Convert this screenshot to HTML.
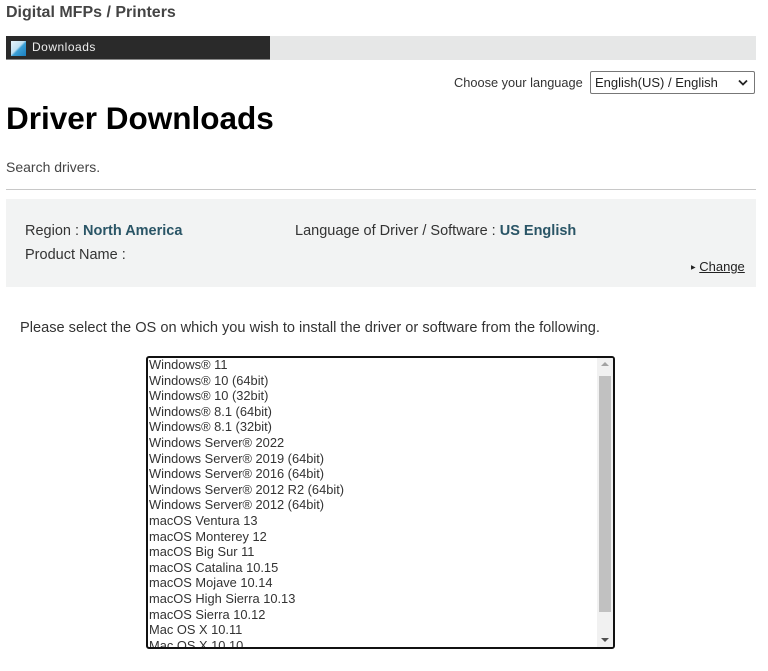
<!DOCTYPE html>
<html><head><meta charset="utf-8"><style>
*{margin:0;padding:0;box-sizing:border-box}
body{width:768px;height:671px;overflow:hidden;background:#fff;font-family:"Liberation Sans",Arial,sans-serif;color:#333;position:relative}
.a{position:absolute;white-space:nowrap}
.b{color:#2a5566;font-weight:bold}
.list div{height:15.6px;line-height:15.6px;font-size:12.85px;color:#333}
</style></head><body>
<div class="a" style="left:6px;top:4px;font-size:16px;font-weight:bold;color:#444">Digital MFPs / Printers</div>
<div class="a" style="left:6px;top:36px;width:750px;height:24px;background:#e6e7e7"></div>
<div class="a" style="left:6px;top:36px;width:264px;height:24px;background:#2a2a2a;border-bottom:1px solid #888"></div>
<div class="a" style="left:11px;top:41px;width:15px;height:15px;background:linear-gradient(135deg,#e8f4fb 0%,#bfe0f2 45%,#3b9fd6 55%,#1a7fc0 100%)"></div>
<div class="a" style="left:32px;top:40px;font-size:12px;color:#eee;letter-spacing:0.5px">Downloads</div>
<div class="a" style="left:454px;top:75px;font-size:12.8px;color:#333">Choose your language</div>
<div class="a" style="left:590px;top:71px;width:165px;height:23px;border:1px solid #777;border-radius:2px;font-size:13px;color:#222;padding:3px 0 0 4px">English(US) / English<svg style="position:absolute;right:6px;top:7px" width="10" height="7" viewBox="0 0 10 7"><path d="M1 1.5L5 5.5L9 1.5" fill="none" stroke="#222" stroke-width="1.8"/></svg></div>
<div class="a" style="left:6px;top:100px;font-size:31.5px;font-weight:bold;color:#000">Driver Downloads</div>
<div class="a" style="left:6px;top:159px;font-size:14px;color:#444">Search drivers.</div>
<div class="a" style="left:6px;top:189px;width:750px;height:1px;background:#c8c8c8"></div>
<div class="a" style="left:6px;top:199px;width:750px;height:88px;background:#f2f3f3"></div>
<div class="a" style="left:25px;top:223px;font-size:14.5px">Region : <span class="b">North America</span></div>
<div class="a" style="left:295px;top:223px;font-size:14.5px">Language of Driver / Software : <span class="b">US English</span></div>
<div class="a" style="left:25px;top:247px;font-size:14.5px">Product Name :</div>
<div class="a" style="left:691px;top:259px;font-size:13px;color:#222"><span style="font-size:6px;vertical-align:2px">&#9654;</span> <span style="text-decoration:underline">Change</span></div>
<div class="a" style="left:20px;top:320px;font-size:14.6px;color:#333">Please select the OS on which you wish to install the driver or software from the following.</div>
<div class="a" style="left:146px;top:356px;width:469px;height:293px;border:2px solid #111;border-radius:3px;overflow:hidden">
<div class="list" style="position:absolute;left:1px;top:-1px">
<div>Windows® 11</div><div>Windows® 10 (64bit)</div><div>Windows® 10 (32bit)</div><div>Windows® 8.1 (64bit)</div><div>Windows® 8.1 (32bit)</div><div>Windows Server® 2022</div><div>Windows Server® 2019 (64bit)</div><div>Windows Server® 2016 (64bit)</div><div>Windows Server® 2012 R2 (64bit)</div><div>Windows Server® 2012 (64bit)</div><div>macOS Ventura 13</div><div>macOS Monterey 12</div><div>macOS Big Sur 11</div><div>macOS Catalina 10.15</div><div>macOS Mojave 10.14</div><div>macOS High Sierra 10.13</div><div>macOS Sierra 10.12</div><div>Mac OS X 10.11</div><div>Mac OS X 10.10</div>
</div>
<div style="position:absolute;right:0;top:0;width:16px;height:100%;background:#f1f1f1"></div>
<div style="position:absolute;right:2px;top:18px;width:12px;height:236px;background:#c1c1c1"></div>
<div style="position:absolute;right:4px;top:4px;width:0;height:0;border-left:4px solid transparent;border-right:4px solid transparent;border-bottom:4px solid #a3a3a3"></div>
<div style="position:absolute;right:4px;bottom:5px;width:0;height:0;border-left:4px solid transparent;border-right:4px solid transparent;border-top:4px solid #505050"></div>
</div>
</body></html>
